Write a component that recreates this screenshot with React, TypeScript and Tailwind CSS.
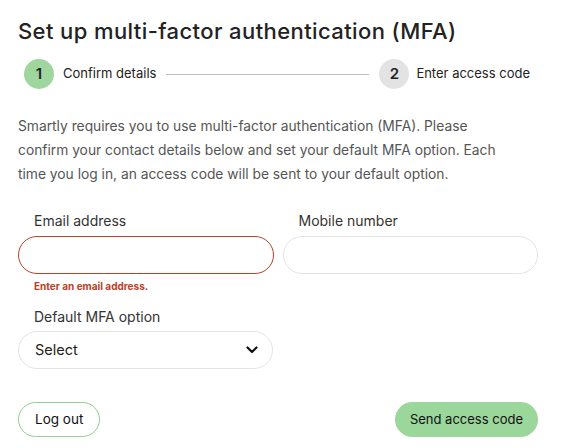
import React from 'react';

const Field: React.FC<{ label: string; error?: string }> = ({ label, error }) => (
  <div className="flex-1">
    <label className="block pl-4 text-[14px] leading-5 text-[#333] mb-[5px]">{label}</label>
    <input
      className={`w-full h-[38px] rounded-full border bg-white px-4 outline-none ${
        error ? 'border-[#b5442a]' : 'border-[#e4e4e4]'
      }`}
    />
    {error && <p className="pl-4 mt-[4px] text-[10px] leading-4 font-bold text-[#b8412a]">{error}</p>}
  </div>
);

export default function App() {
  return (
    <div className="w-[564px] h-[448px] bg-white px-[18px] pt-[17px] font-['Inter',sans-serif] text-[#222]">
      <h1 className="text-[22px] font-medium leading-7 tracking-[0.4px] text-[#222]">
        Set up multi-factor authentication (MFA)
      </h1>

      <div className="mt-[14px] flex items-center pl-[6px] pr-[16px]">
        <span className="w-[30px] h-[30px] rounded-full bg-[#9ed69e] flex items-center justify-center text-[15px] font-semibold">1</span>
        <span className="ml-[9px] text-[13px] text-[#222]">Confirm details</span>
        <span className="mx-[10px] flex-1 h-px bg-[#bdbdbd]" />
        <span className="w-[30px] h-[30px] rounded-full bg-[#e3e3e3] flex items-center justify-center text-[15px] font-semibold">2</span>
        <span className="ml-[7px] text-[13px] text-[#222]">Enter access code</span>
      </div>

      <p className="mt-[25px] text-[13.8px] leading-6 text-[#555]">
        Smartly requires you to use multi-factor authentication (MFA). Please
        <br />
        confirm your contact details below and set your default MFA option. Each
        <br />
        time you log in, an access code will be sent to your default option.
      </p>

      <div className="mt-[25px] flex gap-[9px] pr-[8px]">
        <Field label="Email address" error="Enter an email address." />
        <Field label="Mobile number" />
      </div>

      <div className="mt-[13px] w-[255px]">
        <label className="block pl-4 text-[14px] leading-5 text-[#333] mb-[4px]">Default MFA option</label>
        <div className="h-[38px] rounded-full border border-[#e4e4e4] flex items-center justify-between pl-4 pr-[14px]">
          <span className="text-[14.5px] text-[#222]">Select</span>
          <svg width="12" height="8" viewBox="0 0 12 8" fill="none">
            <path d="M1.5 1.5L6 6L10.5 1.5" stroke="#111" strokeWidth="2.2" strokeLinecap="round" strokeLinejoin="round" />
          </svg>
        </div>
      </div>

      <div className="mt-[33px] flex items-center justify-between pr-[8px]">
        <button className="h-[35px] px-4 rounded-full border border-[#8fd18f] text-[13.5px] text-[#111]">Log out</button>
        <button className="h-[35px] px-[15px] rounded-full bg-[#9bd69b] text-[13px] text-[#111]">Send access code</button>
      </div>
    </div>
  );
}
